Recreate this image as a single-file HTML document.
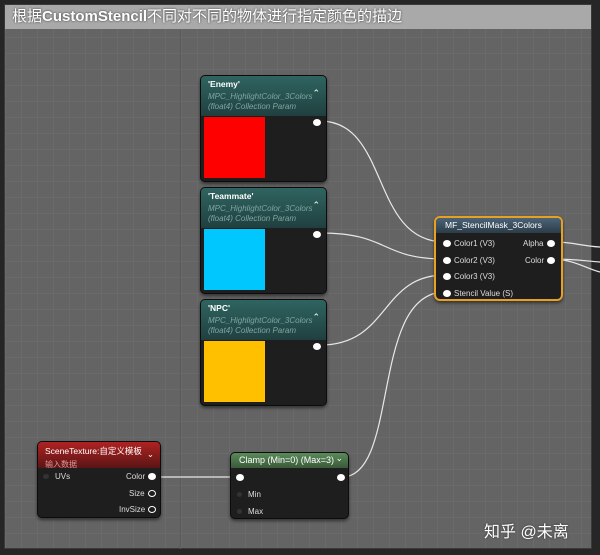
<!DOCTYPE html>
<html><head><meta charset="utf-8"><style>
*{margin:0;padding:0;box-sizing:border-box}
body{width:600px;height:555px;background:#262626;position:relative;overflow:hidden;font-family:"Liberation Sans","Noto Sans CJK SC",sans-serif}
.cm{position:absolute;left:4px;top:4px;width:588px;height:545px;background-color:#646464;
background-image:linear-gradient(#6a6a6a 1px,transparent 1px),linear-gradient(90deg,#6a6a6a 1px,transparent 1px);background-size:16px 16px;border:1px solid #3a3a3a}
.vl{position:absolute;left:180px;top:30px;width:1px;height:519px;background:#595959}
.title{position:absolute;left:5px;top:5px;width:586px;height:24px;background:#a9a9a9;color:#fff;font-size:15px;line-height:24px;padding-left:7px;text-shadow:0 0 2px #333;font-weight:normal}
.node{position:absolute;background:#1e1e1e;border:1px solid #0c0c0c;border-radius:5px;box-shadow:0 2px 3px rgba(0,0,0,.5);overflow:hidden;color:#ddd;font-size:8px}
.hd{background:linear-gradient(#2f6460,#20403f);padding:3px 7px;height:40px;position:relative}
.hd b{color:#fff;font-size:8.5px;display:block;margin-bottom:3px}
.hd i{color:#7fa5a2;font-size:8px;display:block;line-height:10px}
.car{position:absolute;right:6px;top:12px;color:#fff;font-size:9px}
.sw{position:absolute;left:3px;width:61px;height:61px}
.pin{position:absolute;width:8px;height:7px;background:#fff;border-radius:50%}
.row{position:absolute;font-size:8px;color:#ddd}
svg{position:absolute;left:0;top:0}
</style></head><body>
<div class="cm"></div><div class="vl"></div>
<div class="title">根据<b>CustomStencil</b>不同对不同的物体进行指定颜色的描边</div>
<svg width="600" height="555"><g fill="none" stroke="#e8e8e8" stroke-width="1.2">
<path d="M320 121 C390 121 370 242 445 242"/>
<path d="M320 233 C390 233 380 259 445 259"/>
<path d="M320 345 C390 345 380 275 445 275"/>
<path d="M342 477 C400 477 370 292 445 292"/>
<path d="M153 477 L238 477"/>
<path d="M553 242 C575 242 580 246 600 247"/>
<path d="M553 259 C575 259 585 261 600 262"/>
<path d="M553 259 C575 260 585 268 600 272"/>
</g></svg>

<div class="node" style="left:200px;top:75px;width:127px;height:107px"><div class="hd"><b>'Enemy'</b><i>MPC_HighlightColor_3Colors</i><i>(float4) Collection Param</i><span class="car">⌃</span></div><div class="sw" style="top:41px;background:#ff0000"></div><div class="pin" style="left:112px;top:43px"></div></div>
<div class="node" style="left:200px;top:187px;width:127px;height:107px"><div class="hd"><b>'Teammate'</b><i>MPC_HighlightColor_3Colors</i><i>(float4) Collection Param</i><span class="car">⌃</span></div><div class="sw" style="top:41px;background:#00c8ff"></div><div class="pin" style="left:112px;top:43px"></div></div>
<div class="node" style="left:200px;top:299px;width:127px;height:107px"><div class="hd"><b>'NPC'</b><i>MPC_HighlightColor_3Colors</i><i>(float4) Collection Param</i><span class="car">⌃</span></div><div class="sw" style="top:41px;background:#ffc000"></div><div class="pin" style="left:112px;top:43px"></div></div>

<div class="node" style="left:434px;top:216px;width:129px;height:85px;border:2px solid #e8a020;border-radius:6px">
<div style="background:linear-gradient(#4a6478,#2c3c48);height:15px;color:#fff;font-size:8.5px;padding:2px 9px">MF_StencilMask_3Colors</div>
<div class="pin" style="left:7px;top:22px"></div><div class="row" style="left:18px;top:21px">Color1 (V3)</div>
<div class="pin" style="left:7px;top:39px"></div><div class="row" style="left:18px;top:38px">Color2 (V3)</div>
<div class="pin" style="left:7px;top:55px"></div><div class="row" style="left:18px;top:54px">Color3 (V3)</div>
<div class="pin" style="left:7px;top:72px"></div><div class="row" style="left:18px;top:71px">Stencil Value (S)</div>
<div class="row" style="left:87px;top:21px">Alpha</div><div class="pin" style="left:111px;top:22px"></div>
<div class="row" style="left:89px;top:38px">Color</div><div class="pin" style="left:111px;top:39px"></div>
</div>

<div class="node" style="left:37px;top:441px;width:124px;height:77px">
<div style="background:linear-gradient(#b02222,#5a1515);height:26px;padding:3px 7px;color:#fff;font-size:8.5px;position:relative">SceneTexture:自定义模板<div style="color:#d99;font-size:8px;margin-top:2px">输入数据</div><span style="position:absolute;right:6px;top:7px">⌄</span></div>
<div style="position:absolute;left:5px;top:32px;width:6px;height:5px;border-radius:50%;background:#333"></div><div class="row" style="left:17px;top:30px">UVs</div>
<div class="row" style="left:88px;top:30px">Color</div><div class="pin" style="left:110px;top:31px"></div>
<div class="row" style="left:91px;top:47px">Size</div><div class="pin" style="left:110px;top:48px;background:none;border:1.5px solid #fff"></div>
<div class="row" style="left:81px;top:63px">InvSize</div><div class="pin" style="left:110px;top:64px;background:none;border:1.5px solid #fff"></div>
</div>

<div class="node" style="left:230px;top:452px;width:119px;height:67px">
<div style="background:linear-gradient(#5a8a5a,#3a5a3a);height:15px;color:#fff;font-size:9px;padding:2px 8px;position:relative">Clamp (Min=0) (Max=3)<span style="position:absolute;right:5px;top:0">⌄</span></div>
<div class="pin" style="left:5px;top:21px"></div><div class="pin" style="left:106px;top:21px"></div>
<div style="position:absolute;left:6px;top:39px;width:5px;height:5px;border-radius:50%;background:#333"></div><div class="row" style="left:17px;top:37px">Min</div>
<div style="position:absolute;left:6px;top:56px;width:5px;height:5px;border-radius:50%;background:#333"></div><div class="row" style="left:17px;top:54px">Max</div>
</div>

<div style="position:absolute;left:484px;top:518px;color:#fff;font-size:16px;text-shadow:0 0 2px #333">知乎 @未离</div>
</body></html>
